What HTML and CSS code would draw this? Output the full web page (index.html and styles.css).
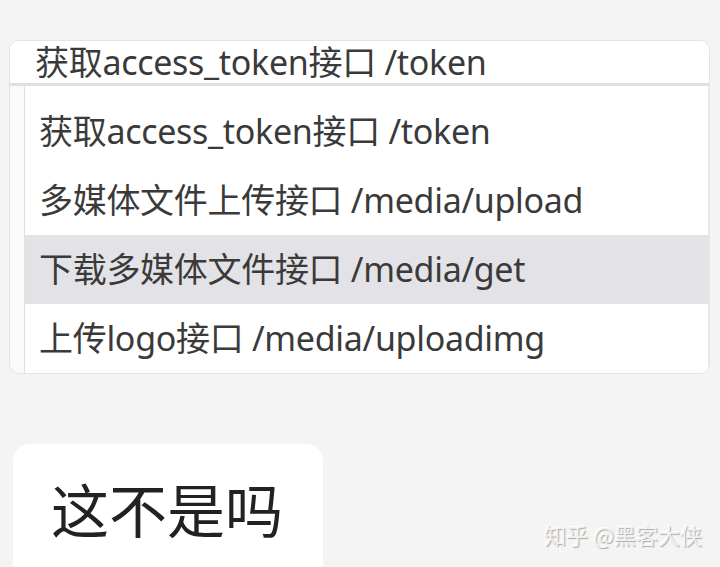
FILE: index.html
```html
<!DOCTYPE html>
<html lang="zh-CN">
<head>
  <meta charset="UTF-8">
  <meta name="viewport" content="width=device-width, initial-scale=1.0">
  <title>接口选择</title>
  <link rel="stylesheet" href="styles.css">
</head>
<body>
  <div class="picker">
    <div class="picker-input">获取access_token接口 /token</div>
    <div class="picker-body">
      <ul class="picker-list">
        <li>获取access_token接口 /token</li>
        <li>多媒体文件上传接口 /media/upload</li>
        <li class="active">下载多媒体文件接口 /media/get</li>
        <li>上传logo接口 /media/uploadimg</li>
      </ul>
    </div>
  </div>

  <div class="chat">
    <div class="bubble">这不是吗</div>
  </div>

  <div class="watermark">知乎 @黑客大侠</div>
</body>
</html>
```

FILE: styles.css
```css
* {
  margin: 0;
  padding: 0;
  box-sizing: border-box;
}

body {
  font-family: "Noto Sans", "Noto Sans CJK SC", sans-serif;
  background-color: #f4f4f4;
  color: #3a3a3a;
  width: 720px;
  height: 567px;
  overflow: hidden;
  position: relative;
}

/* 下拉框 */
.picker {
  margin: 40px 0 0 9px;
  width: 701px;
  background-color: #fafafa;
  border: 1px solid #e4e4e4;
  border-radius: 10px;
  overflow: hidden;
}

.picker-input {
  height: 45px;
  padding-left: 25px;
  font-size: 34px;
  line-height: 42px;
  letter-spacing: -0.3px;
  white-space: nowrap;
  background-color: #fff;
  border-bottom: 3px solid #e0e0e0;
}

.picker-body {
  padding-left: 14px;
}

.picker-list {
  list-style: none;
  background-color: #fff;
  border-left: 1px solid #e0e0e0;
  border-right: 1px solid #e8e8e8;
  padding-top: 11px;
}

.picker-list li {
  height: 69px;
  line-height: 68px;
  padding-left: 14px;
  font-size: 34px;
  letter-spacing: -0.3px;
  white-space: nowrap;
}

.picker-list li.active {
  background-color: #e2e2e7;
}

/* 聊天气泡 */
.chat {
  margin-top: 70px;
  padding-left: 13px;
}

.bubble {
  width: 310px;
  height: 140px;
  padding: 22px 0 0 38px;
  background-color: #fff;
  border-radius: 16px;
  font-family: "Noto Sans CJK SC", sans-serif;
  font-size: 58px;
  color: #222;
}

.watermark {
  position: absolute;
  right: 18px;
  bottom: 17px;
  font-family: "Noto Sans CJK SC", sans-serif;
  font-size: 22px;
  color: #f2f2f2;
  text-shadow: 1px 1px 1px #a8a8a8, -1px -1px 0 #ffffff;
}
```
